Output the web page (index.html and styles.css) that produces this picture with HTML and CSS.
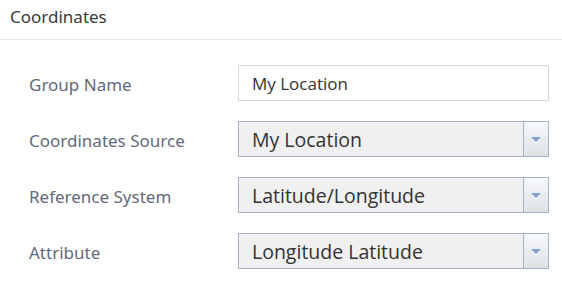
FILE: index.html
```html
<!DOCTYPE html>
<html lang="en">
<head>
    <meta charset="UTF-8">
    <meta name="viewport" content="width=device-width, initial-scale=1.0">
    <title>Coordinates</title>
    <link rel="stylesheet" href="styles.css">
</head>
<body>
    <div class="panel-header">Coordinates</div>

    <div class="form">
        <div class="row">
            <label class="label">Group Name</label>
            <div class="text-input">My Location</div>
        </div>
        <div class="row">
            <label class="label">Coordinates Source</label>
            <div class="select">
                <span class="select-value">My Location</span>
                <span class="select-btn"><span class="arrow"></span></span>
            </div>
        </div>
        <div class="row">
            <label class="label">Reference System</label>
            <div class="select">
                <span class="select-value">Latitude/Longitude</span>
                <span class="select-btn"><span class="arrow"></span></span>
            </div>
        </div>
        <div class="row">
            <label class="label">Attribute</label>
            <div class="select">
                <span class="select-value">Longitude Latitude</span>
                <span class="select-btn"><span class="arrow"></span></span>
            </div>
        </div>
    </div>
</body>
</html>
```

FILE: styles.css
```css
body {
    margin: 0;
    font-family: "Noto Sans", Lato, sans-serif;
    background-color: #fff;
}
.panel-header {
    height: 40px;
    box-sizing: border-box;
    padding: 5px 0 0 10px;
    font-size: 17px;
    color: #3a3a3a;
    border-bottom: 1px solid #dfe9f2;
}
.form {
    display: flex;
    flex-direction: column;
    gap: 20px;
    padding: 25px 13px 0 29px;
}
.row {
    display: flex;
    align-items: center;
}
.label {
    width: 209px;
    padding-top: 2px;
    font-size: 17px;
    color: #5f6a7d;
}
.text-input {
    flex: 1;
    height: 36px;
    box-sizing: border-box;
    border: 1px solid #d8d8d8;
    padding: 0 13px;
    display: flex;
    align-items: center;
    font-family: "Open Sans", sans-serif;
    font-size: 17px;
    color: #333;
}
.select {
    flex: 1;
    height: 36px;
    box-sizing: border-box;
    border: 1px solid #a9b1c4;
    background-color: #f0f0f0;
    display: flex;
}
.select-value {
    flex: 1;
    display: flex;
    align-items: center;
    padding-left: 13px;
    font-family: "Open Sans", sans-serif;
    font-size: 19.5px;
    color: #333;
}
.select-btn {
    width: 24px;
    border-left: 1px solid #a9b1c4;
    background: linear-gradient(#f7f8fa, #dde2e8);
    display: flex;
    align-items: center;
    justify-content: center;
}
.arrow {
    width: 0;
    height: 0;
    border-left: 5px solid transparent;
    border-right: 5px solid transparent;
    border-top: 5px solid #8ea2cb;
}
```
